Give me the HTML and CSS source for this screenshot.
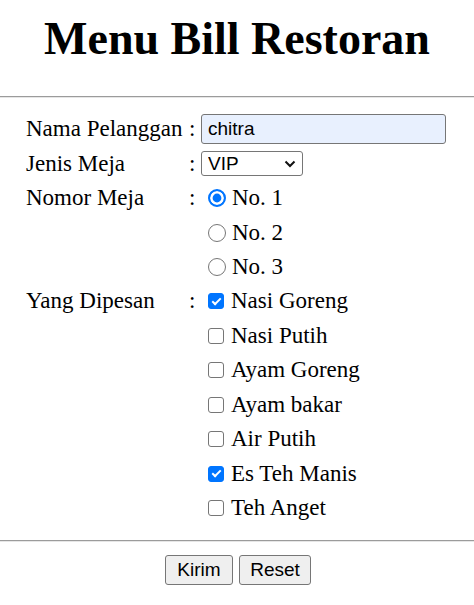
FILE: index.html
```html
<!DOCTYPE html>
<html lang="id">
<head>
<meta charset="utf-8">
<title>Menu Bill Restoran</title>
<link rel="stylesheet" href="styles.css">
</head>
<body>
<h1 class="title">Menu Bill Restoran</h1>
<hr class="rule">
<form class="bill">
  <div class="fields">
    <div class="label">Nama Pelanggan</div>
    <div class="colon">:</div>
    <div class="value"><input class="text-input" type="text" name="nama" value="chitra"></div>

    <div class="label">Jenis Meja</div>
    <div class="colon">:</div>
    <div class="value">
      <div class="select-box">
        <select class="select" name="jenis">
          <option>VIP</option>
          <option>Reguler</option>
        </select>
        <svg class="chevron" width="12" height="8" viewBox="0 0 12 8"><path d="M1.5 1.5 L6 6 L10.5 1.5" fill="none" stroke="#111" stroke-width="2"/></svg>
      </div>
    </div>

    <div class="label">Nomor Meja</div>
    <div class="colon">:</div>
    <div class="value"><label class="opt"><input class="radio" type="radio" name="meja" checked>No. 1</label></div>

    <div class="label"></div><div class="colon"></div>
    <div class="value"><label class="opt"><input class="radio" type="radio" name="meja">No. 2</label></div>

    <div class="label"></div><div class="colon"></div>
    <div class="value"><label class="opt"><input class="radio" type="radio" name="meja">No. 3</label></div>

    <div class="label">Yang Dipesan</div>
    <div class="colon">:</div>
    <div class="value"><label class="opt"><input class="check" type="checkbox" checked>Nasi Goreng</label></div>

    <div class="label"></div><div class="colon"></div>
    <div class="value"><label class="opt"><input class="check" type="checkbox">Nasi Putih</label></div>

    <div class="label"></div><div class="colon"></div>
    <div class="value"><label class="opt"><input class="check" type="checkbox">Ayam Goreng</label></div>

    <div class="label"></div><div class="colon"></div>
    <div class="value"><label class="opt"><input class="check" type="checkbox">Ayam bakar</label></div>

    <div class="label"></div><div class="colon"></div>
    <div class="value"><label class="opt"><input class="check" type="checkbox">Air Putih</label></div>

    <div class="label"></div><div class="colon"></div>
    <div class="value"><label class="opt"><input class="check" type="checkbox" checked>Es Teh Manis</label></div>

    <div class="label"></div><div class="colon"></div>
    <div class="value"><label class="opt"><input class="check" type="checkbox">Teh Anget</label></div>
  </div>
  <hr class="rule">
  <div class="actions">
    <button class="btn btn-kirim" type="submit">Kirim</button>
    <button class="btn btn-reset" type="reset">Reset</button>
  </div>
</form>
</body>
</html>
```

FILE: styles.css
```css
html, body {
  margin: 0;
  padding: 0;
  background: #ffffff;
}

body {
  font-family: "Liberation Serif", "Times New Roman", serif;
  font-size: 23px;
  color: #000;
}

.title {
  font-size: 46px;
  font-weight: bold;
  line-height: 53px;
  text-align: center;
  margin: 12px 0 31px 0;
}

.rule {
  height: 0;
  margin: 0;
  border: 0;
  border-top: 1px solid #9b9b9b;
  border-bottom: 1px solid #e6e6e6;
}

.bill {
  margin: 0;
}

.fields {
  display: grid;
  grid-template-columns: 163px 12px 1fr;
  grid-auto-rows: 34.45px;
  align-items: center;
  padding: 14px 0 15px 26px;
}

.label, .colon, .value {
  line-height: 26px;
  white-space: nowrap;
}

.value {
  display: flex;
  align-items: center;
}

.text-input {
  box-sizing: border-box;
  width: 245px;
  height: 30px;
  margin: 0;
  padding: 0 6px;
  border: 1px solid #767676;
  border-radius: 3px;
  background: #e8f0fe;
  font-family: "Liberation Sans", Arial, sans-serif;
  font-size: 19px;
  color: #000;
}

.select-box {
  box-sizing: border-box;
  display: flex;
  align-items: center;
  width: 102px;
  height: 25px;
  border: 1px solid #767676;
  border-radius: 3px;
  background: #fff;
}

.select {
  appearance: none;
  -webkit-appearance: none;
  flex: 1;
  min-width: 0;
  height: 100%;
  border: 0;
  margin: 0;
  padding: 0 0 0 6px;
  background: transparent;
  font-family: "Liberation Sans", Arial, sans-serif;
  font-size: 19px;
  color: #000;
  outline: none;
}

.chevron {
  flex: none;
  margin-right: 6px;
  pointer-events: none;
}

.opt {
  display: flex;
  align-items: center;
}

.radio {
  appearance: none;
  -webkit-appearance: none;
  box-sizing: border-box;
  flex: none;
  width: 18px;
  height: 18px;
  margin: 0 6px 0 7px;
  border: 1.8px solid #767676;
  border-radius: 50%;
  background: #fff;
}

.radio:checked {
  border: 2px solid #0075ff;
  background: #0075ff;
  box-shadow: inset 0 0 0 2.6px #fff;
}

.check {
  appearance: none;
  -webkit-appearance: none;
  box-sizing: border-box;
  flex: none;
  display: grid;
  place-items: center;
  width: 16px;
  height: 16px;
  margin: 0 7px 0 7px;
  border: 1.8px solid #767676;
  border-radius: 3px;
  background: #fff;
}

.check:checked {
  border-color: #0075ff;
  background: #0075ff;
}

.check:checked::after {
  content: "";
  box-sizing: border-box;
  width: 5px;
  height: 9px;
  margin-top: -2px;
  border-right: 2.4px solid #fff;
  border-bottom: 2.4px solid #fff;
  transform: rotate(45deg);
}

.actions {
  display: flex;
  justify-content: center;
  gap: 6px;
  padding: 13px 0 0 0;
  margin-left: 2px;
}

.btn {
  box-sizing: border-box;
  height: 30px;
  margin: 0;
  padding: 0;
  border: 1px solid #767676;
  border-radius: 3px;
  background: #efefef;
  font-family: "Liberation Sans", Arial, sans-serif;
  font-size: 19px;
  color: #000;
}

.btn-kirim {
  width: 68px;
}

.btn-reset {
  width: 72px;
}
```
